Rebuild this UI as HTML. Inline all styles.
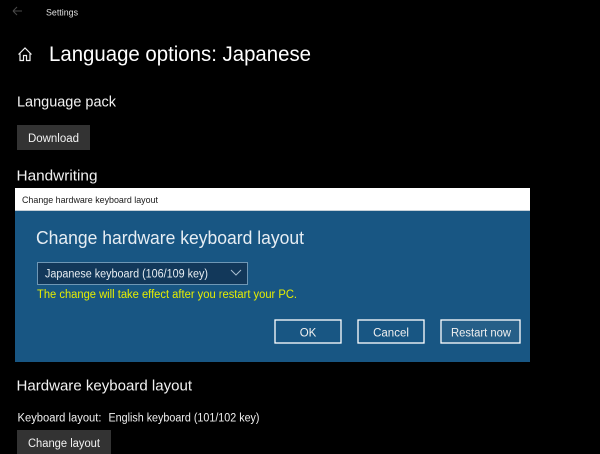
<!DOCTYPE html>
<html>
<head>
<meta charset="utf-8">
<style>
html,body{margin:0;padding:0;background:#000;width:600px;height:454px;overflow:hidden}
svg{display:block}
text{font-family:"Liberation Sans",sans-serif;fill:#fff}
</style>
</head>
<body>
<svg width="600" height="454" viewBox="0 0 600 454" xmlns="http://www.w3.org/2000/svg">
<rect width="600" height="454" fill="#000"/>
<path d="M13 11H22M13 11L17 7M13 11L17 15" stroke="#4a4a4a" stroke-width="1" fill="none"/>
<text x="46" y="15.500" font-size="9.500" textLength="32" lengthAdjust="spacingAndGlyphs" style="fill:#e0e0e0">Settings</text>
<path d="M18.500 54.500L25 48L31.500 54.500M20 53.500V60.500H23.500V55.500H26.500V60.500H30V53.500" stroke="#f0f0f0" stroke-width="1.200" fill="none"/>
<text x="49" y="61" font-size="21" textLength="262" lengthAdjust="spacingAndGlyphs">Language options: Japanese</text>
<text x="17" y="106.500" font-size="15" textLength="99" lengthAdjust="spacingAndGlyphs" style="fill:#f2f2f2">Language pack</text>
<rect x="17" y="125" width="73" height="25" fill="#333"/>
<text x="28" y="142" font-size="11.500" textLength="51" lengthAdjust="spacingAndGlyphs" style="fill:#f2f2f2">Download</text>
<text x="16.500" y="180.500" font-size="15" textLength="81" lengthAdjust="spacingAndGlyphs" style="fill:#f2f2f2">Handwriting</text>

<rect x="15" y="188" width="515" height="174" fill="#185683"/>
<rect x="15" y="188" width="515" height="22" fill="#fff"/>
<rect x="15" y="210" width="515" height="1" fill="#c5d0d8"/>
<text x="22" y="203" font-size="9.500" textLength="136" lengthAdjust="spacingAndGlyphs" style="fill:#1a1a1a">Change hardware keyboard layout</text>
<text x="36" y="244" font-size="18" textLength="268" lengthAdjust="spacingAndGlyphs" style="fill:#e6edf3">Change hardware keyboard layout</text>

<rect x="37.500" y="262.500" width="210" height="22" fill="#12385a" stroke="#6f97b5" stroke-width="1"/>
<text x="45" y="277.500" font-size="11.500" textLength="163" lengthAdjust="spacingAndGlyphs" style="fill:#e8eef3">Japanese keyboard (106/109 key)</text>
<path d="M231 270L236 275L241 270" stroke="#a9bfd0" stroke-width="1" fill="none"/>
<text x="37" y="298" font-size="11.500" textLength="260" lengthAdjust="spacingAndGlyphs" style="fill:#e6ee00">The change will take effect after you restart your PC.</text>

<rect x="275" y="320" width="66" height="23" fill="#185683" stroke="#fff" stroke-width="1.300"/>
<text x="308" y="336.500" font-size="11.500" text-anchor="middle" style="fill:#f0f0f0">OK</text>
<rect x="358" y="320" width="66" height="23" fill="#185683" stroke="#fff" stroke-width="1.300"/>
<text x="391" y="336.500" font-size="11.500" text-anchor="middle" style="fill:#f0f0f0">Cancel</text>
<rect x="441" y="320" width="79" height="23" fill="#265f88" stroke="#fff" stroke-width="1.300"/>
<text x="451" y="336.500" font-size="11.500" textLength="60" lengthAdjust="spacingAndGlyphs" style="fill:#f0f0f0">Restart now</text>

<text x="16.500" y="390.500" font-size="15" textLength="175.500" lengthAdjust="spacingAndGlyphs" style="fill:#f2f2f2">Hardware keyboard layout</text>
<text x="17.500" y="421.500" font-size="11.500" textLength="84" lengthAdjust="spacingAndGlyphs" style="fill:#f0f0f0">Keyboard layout:</text>
<text x="108.500" y="421.500" font-size="11.500" textLength="151" lengthAdjust="spacingAndGlyphs" style="fill:#f0f0f0">English keyboard (101/102 key)</text>
<rect x="17" y="430" width="94" height="24" fill="#333"/>
<text x="28" y="447" font-size="11.500" textLength="72" lengthAdjust="spacingAndGlyphs" style="fill:#f2f2f2">Change layout</text>
</svg>
</body>
</html>
